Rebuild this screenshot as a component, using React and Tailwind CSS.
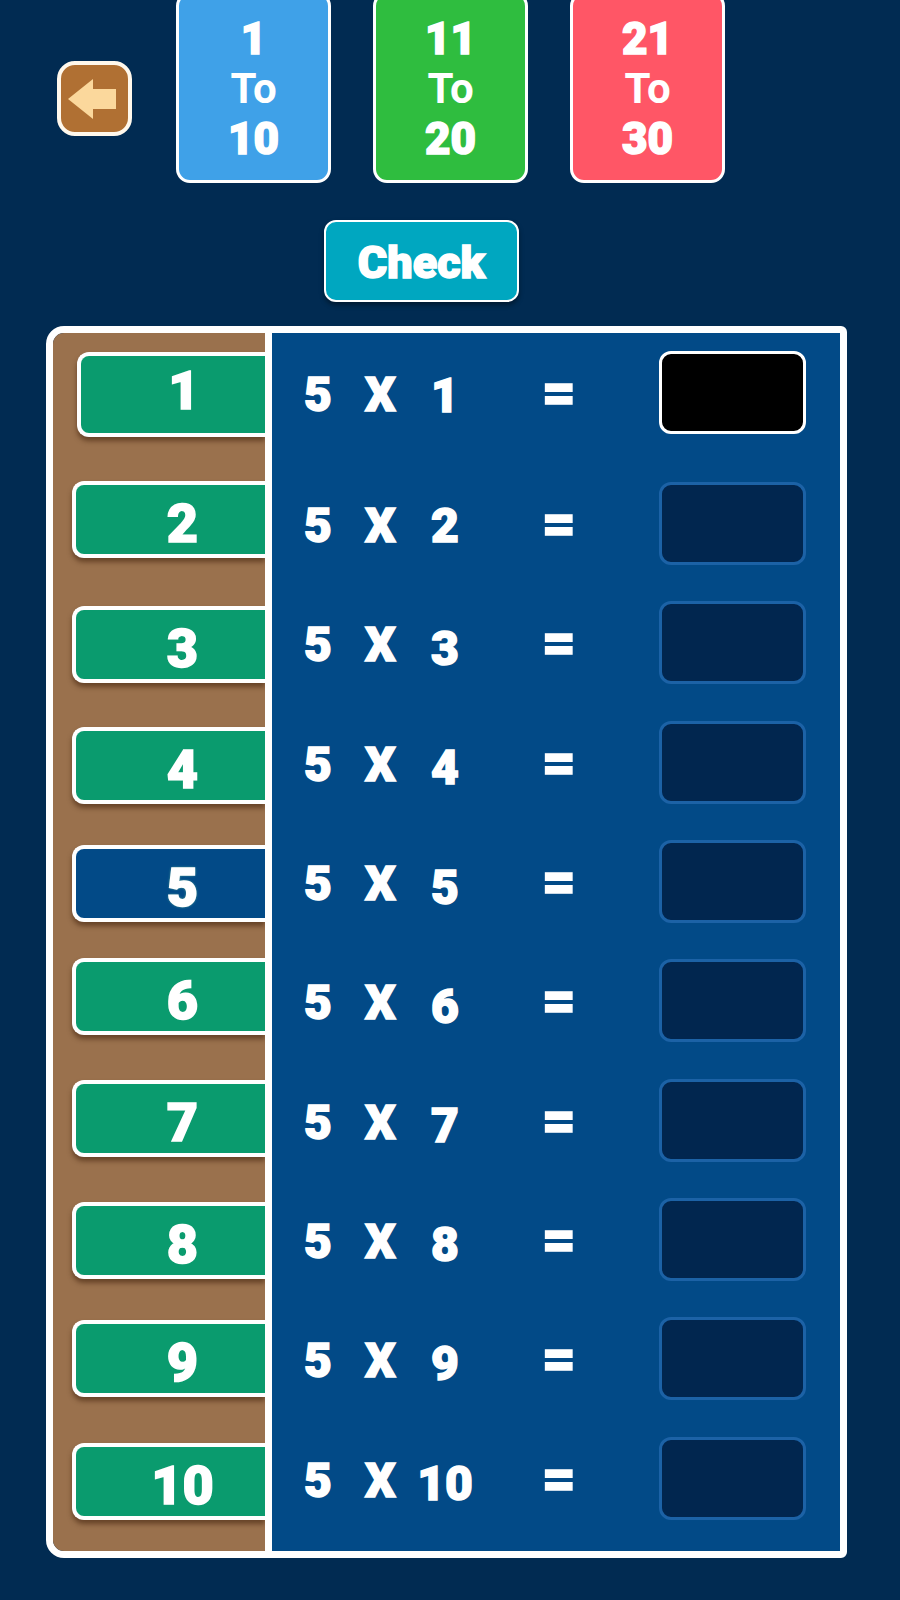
import React from 'react';

const cards = [
    { from: '1', to: '10', color: 'bg-[#3fa1e8]' },
    { from: '11', to: '20', color: 'bg-[#2fbd3f]' },
    { from: '21', to: '30', color: 'bg-[#ff5666]' },
];

// tops and heights are uneven in the game board, so each row keeps its own spacing
const rows = [
    { n: 1, pill: 'mt-[19px] ml-[24px] h-[85px] pl-[22px] pb-[8px]', row: 'mt-[18px]', shift: 'mt-[6px]' },
    { n: 2, pill: 'mt-[44px] ml-[19px] h-[77px] pl-[24px] pt-[7px]', row: 'mt-[48px]', shift: 'mt-[4px]' },
    { n: 3, pill: 'mt-[48px] ml-[19px] h-[77px] pl-[24px] pt-[7px]', row: 'mt-[36px]', shift: 'mt-[12px]' },
    { n: 4, pill: 'mt-[44px] ml-[19px] h-[77px] pl-[24px] pt-[7px]', row: 'mt-[37px]', shift: 'mt-[10px]' },
    { n: 5, pill: 'mt-[41px] ml-[19px] h-[77px] pl-[24px] pt-[7px]', row: 'mt-[36px]', shift: 'mt-[12px]', active: true },
    { n: 6, pill: 'mt-[36px] ml-[19px] h-[77px] pl-[24px] pt-[7px]', row: 'mt-[36px]', shift: 'mt-[12px]' },
    { n: 7, pill: 'mt-[45px] ml-[19px] h-[77px] pl-[24px] pt-[7px]', row: 'mt-[37px]', shift: 'mt-[10px]' },
    { n: 8, pill: 'mt-[45px] ml-[19px] h-[77px] pl-[24px] pt-[7px]', row: 'mt-[36px]', shift: 'mt-[10px]' },
    { n: 9, pill: 'mt-[41px] ml-[19px] h-[77px] pl-[24px] pt-[7px]', row: 'mt-[36px]', shift: 'mt-[10px]' },
    { n: 10, pill: 'mt-[46px] ml-[19px] h-[77px] pl-[24px] pt-[7px]', row: 'mt-[37px]', shift: 'mt-[10px]' },
];

const heavy = "font-['Roboto',sans-serif] font-black [-webkit-text-stroke:1.5px_white]";
const bold = "font-['Roboto',sans-serif] font-bold";

const App = () => {
    return (
        <div className="w-[900px] h-[1600px] bg-[#012b52] overflow-hidden text-white">
            {/* Top bar */}
            <div className="flex items-start pl-[57px]">
                <button className="mt-[61px] w-[75px] h-[75px] flex items-center justify-center rounded-[18px] border-[4px] border-[#fff8ec] bg-[#b07033]">
                    <svg className="mr-[5px]" width="48" height="40" viewBox="0 0 48 40">
                        <path d="M0 20 L25 0 V10 H48 V30 H25 V40 Z" fill="#fbd89c" />
                    </svg>
                </button>
                <div className="flex gap-[42px] ml-[44px] -mt-[8px]">
                    {cards.map(card => (
                        <div key={card.from} className={`w-[155px] h-[191px] pt-[2px] flex flex-col items-center justify-center rounded-[14px] border-[3px] border-white ${card.color}`}>
                            <span className={`${heavy} text-[44px] leading-[50px]`}>{card.from}</span>
                            <span className={`${bold} text-[42px] leading-[50px]`}>To</span>
                            <span className={`${heavy} text-[44px] leading-[50px]`}>{card.to}</span>
                        </div>
                    ))}
                </div>
            </div>

            {/* Check button */}
            <div className="pl-[324px] mt-[37px]">
                <button className={`w-[195px] h-[82px] pt-[3px] rounded-[12px] border-[2px] border-white bg-[#00a7c0] shadow-[0_3px_5px_rgba(0,0,0,0.4)] text-[45px] leading-none ${heavy}`}>
                    Check
                </button>
            </div>

            {/* Board */}
            <div className="ml-[46px] mt-[24px] w-[801px] h-[1232px] flex rounded-tl-[18px] rounded-bl-[18px] rounded-tr-[6px] rounded-br-[6px] border-[7px] border-white overflow-hidden">
                <div className="w-[212px] bg-[#9a714d] flex flex-col">
                    {rows.map(r => (
                        <div
                            key={r.n}
                            className={`shrink-0 flex items-center justify-center rounded-l-[12px] border-[4px] border-r-0 border-white shadow-[0_4px_5px_rgba(60,30,10,0.55)] text-[54px] ${heavy} ${r.pill} ${r.active ? 'bg-[#024a87] [text-shadow:0_0_3px_#7fd6a0]' : 'bg-[#0a9b6e]'}`}
                        >
                            {r.n}
                        </div>
                    ))}
                </div>
                <div className="w-[7px] bg-white" />
                <div className="flex-1 bg-[#024a87] flex flex-col pl-[32px]">
                    {rows.map(r => (
                        <div key={r.n} className={`shrink-0 h-[83px] grid grid-cols-[61px_47px_66px_64px_117px_147px] items-center text-[48px] leading-none ${heavy} ${r.row}`}>
                            <span className="mt-[5px]">5</span>
                            <span className="mt-[5px]">X</span>
                            <span className={`text-center ${r.shift}`}>{r.n}</span>
                            <span />
                            <span className="mb-[2px] text-[58px]">=</span>
                            <div className={r.n === 1 ? 'h-[83px] rounded-[12px] border-[3px] border-white bg-black' : 'h-[83px] rounded-[12px] border-[3px] border-[#1c62a6] bg-[#01264f]'} />
                        </div>
                    ))}
                </div>
            </div>
        </div>
    );
};

export default App;
